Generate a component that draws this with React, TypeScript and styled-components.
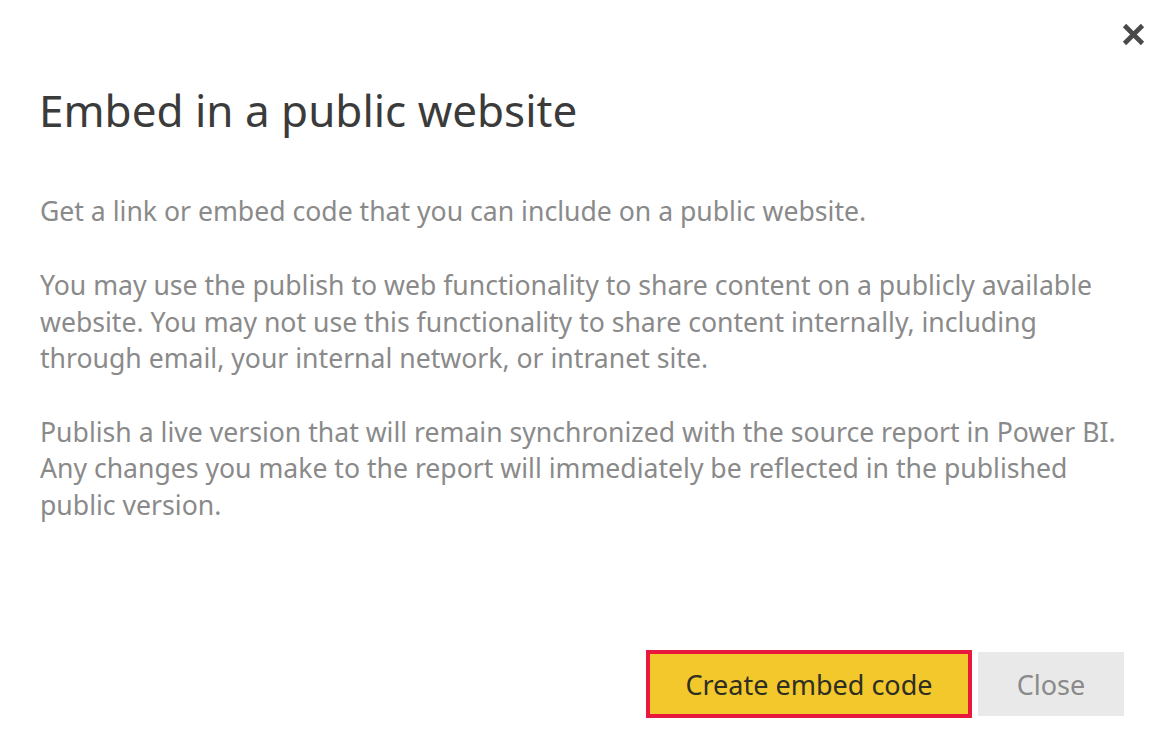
import React from "react";
import styled, { createGlobalStyle } from "styled-components";

const Global = createGlobalStyle`
  html, body { margin: 0; padding: 0; background: #ffffff; }
  body { font-family: "Noto Sans", "Open Sans", sans-serif; }
`;

const Dialog = styled.div`
  width: 1164px;
  height: 734px;
  box-sizing: border-box;
  background: #ffffff;
  display: flex;
  flex-direction: column;
  padding: 0 40px 0 40px;
  position: relative;
`;

const CloseX = styled.button`
  position: absolute;
  top: 23px;
  right: 19px;
  width: 23px;
  height: 23px;
  padding: 0;
  border: none;
  background: transparent;
  display: flex;
  align-items: center;
  justify-content: center;
`;

const Title = styled.h1`
  margin: 82px 0 0 -1px;
  font-weight: 400;
  font-size: 44px;
  line-height: 56px;
  color: #3b3b3b;
`;

const Body = styled.div`
  margin-top: 55px;
  display: flex;
  flex-direction: column;
  gap: 38px;
`;

const Para = styled.p`
  margin: 0;
  font-size: 26.6px;
  line-height: 36.3px;
  color: #8a8a8a;
`;

const Footer = styled.div`
  margin-top: auto;
  margin-bottom: 16px;
  display: flex;
  justify-content: flex-end;
  align-items: center;
  gap: 6px;
`;

const Button = styled.button<{ $primary?: boolean }>`
  font-family: "Noto Sans", "Open Sans", sans-serif;
  font-size: 27px;
  height: ${(p) => (p.$primary ? "68px" : "64px")};
  padding: 0 0 ${(p) => (p.$primary ? "0" : "0")};
  width: ${(p) => (p.$primary ? "326px" : "146px")};
  box-sizing: border-box;
  background: ${(p) => (p.$primary ? "#f2c82c" : "#e9e9e9")};
  color: ${(p) => (p.$primary ? "#2e2e22" : "#8a8a8a")};
  border: ${(p) => (p.$primary ? "4px solid #e8193c" : "none")};
  cursor: pointer;
`;

export default function App() {
  return (
    <>
      <Global />
      <Dialog>
        <CloseX aria-label="Close">
          <svg width="23" height="23" viewBox="0 0 23 23">
            <path d="M2.5 2.5 L20.5 20.5 M20.5 2.5 L2.5 20.5" stroke="#4a4a4a" strokeWidth="4.6" strokeLinecap="butt" />
          </svg>
        </CloseX>
        <Title>Embed in a public website</Title>
        <Body>
          <Para>Get a link or embed code that you can include on a public website.</Para>
          <Para>
            You may use the publish to web functionality to share content on a publicly available
            <br />
            website. You may not use this functionality to share content internally, including
            <br />
            through email, your internal network, or intranet site.
          </Para>
          <Para>
            Publish a live version that will remain synchronized with the source report in Power BI.
            <br />
            Any changes you make to the report will immediately be reflected in the published
            <br />
            public version.
          </Para>
        </Body>
        <Footer>
          <Button $primary>Create embed code</Button>
          <Button>Close</Button>
        </Footer>
      </Dialog>
    </>
  );
}
